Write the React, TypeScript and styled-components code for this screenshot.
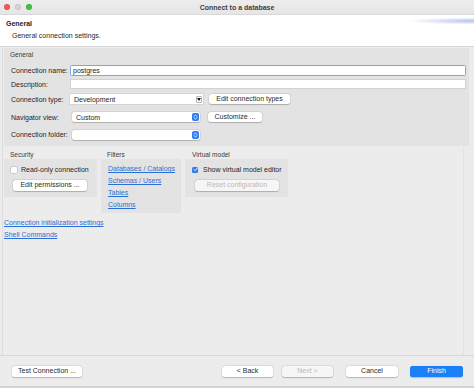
import React from "react";
import styled, { createGlobalStyle } from "styled-components";

const Global = createGlobalStyle`
  html, body { margin: 0; padding: 0; background: #ececec; }
  body { font-family: "Liberation Sans", Arial, sans-serif; font-size: 7px; color: #262626; }
  * { box-sizing: border-box; }
`;

const FONT = `"Liberation Sans", Arial, sans-serif`;

const Window = styled.div`
  width: 474px;
  height: 388px;
  display: flex;
  flex-direction: column;
  background: #ececec;
  overflow: hidden;
`;

const TitleBar = styled.div`
  height: 15px;
  flex: none;
  display: grid;
  grid-template-columns: 1fr auto 1fr;
  align-items: center;
  background: linear-gradient(#ededed, #e6e6e6);
  border-bottom: 1px solid #d9d9d9;
  padding: 0 4px;
`;

const Lights = styled.div`
  display: flex;
  gap: 5px;
  align-items: center;
`;

const Light = styled.span<{ $c: string }>`
  width: 6px;
  height: 6px;
  border-radius: 50%;
  background: ${(p) => p.$c};
  box-shadow: inset 0 0 0 0.5px rgba(0, 0, 0, 0.12);
`;

const Title = styled.div`
  font-weight: bold;
  font-size: 7px;
  color: #3d3d3d;
`;

const Header = styled.div`
  height: 32px;
  flex: none;
  background-color: #ffffff;
  background-image: radial-gradient(ellipse 64px 3.5px at 472px 6px, rgba(160, 175, 225, 0.75), rgba(255, 255, 255, 0));
  border-bottom: 1px solid #d6d6d6;
  padding: 4px 6px 0 6px;
  display: flex;
  flex-direction: column;
`;

const HeaderTitle = styled.div`
  font-weight: bold;
  font-size: 7px;
  line-height: 9px;
  color: #1e1e1e;
`;

const HeaderDesc = styled.div`
  font-size: 7px;
  line-height: 9px;
  margin: 3px 0 0 6px;
  color: #2a2a2a;
`;

const Content = styled.div`
  flex: 1;
  display: flex;
  flex-direction: column;
  border-left: 1px solid #dedede;
  border-right: 1px solid #e2e2e2;
  margin: 0 10px 0 2px;
  padding: 1px 0 0 1px;
`;

const GeneralPanel = styled.div`
  height: 98px;
  background: #e3e3e3;
  padding: 2px 3px 0 7px;
  margin-right: -6px;
  display: flex;
  flex-direction: column;
`;

const GroupTitle = styled.div<{ $ml?: number }>`
  font-size: 6.5px;
  line-height: 9px;
  color: #3a3a3a;
  margin-left: ${(p) => p.$ml ?? 0}px;
`;

const FormRow = styled.div<{ $h: number; $mt: number }>`
  height: ${(p) => p.$h}px;
  margin-top: ${(p) => p.$mt}px;
  display: grid;
  grid-template-columns: 59px 1fr;
  align-items: center;
`;

const Label = styled.div`
  font-size: 7px;
  color: #262626;
  white-space: nowrap;
`;

const Field = styled.div`
  display: flex;
  align-items: center;
  height: 100%;
`;

const TextInput = styled.div<{ $focus?: boolean }>`
  flex: 1;
  height: 100%;
  background: #fff;
  font-size: 7px;
  display: flex;
  align-items: center;
  padding-left: 2px;
  color: #1e1e1e;
  border: ${(p) => (p.$focus ? "1.5px solid #79a6ea" : "0.5px solid #d2d2d2")};
  border-radius: ${(p) => (p.$focus ? "1.5px" : "0")};
`;

const ComboBox = styled.div<{ $w: number }>`
  width: ${(p) => p.$w}px;
  height: 10px;
  background: #fff;
  display: flex;
  align-items: center;
  justify-content: space-between;
  padding: 0 1px 0 4px;
  font-size: 7px;
  color: #1e1e1e;
  box-shadow: 0 0 0 0.5px rgba(0, 0, 0, 0.12);
`;

const ComboArrow = styled.span`
  width: 6px;
  height: 7px;
  background: #fff;
  border: 0.5px solid #b5b5b5;
  border-radius: 1px;
  display: flex;
  align-items: center;
  justify-content: center;
`;

const Popup = styled.div<{ $w: number }>`
  width: ${(p) => p.$w}px;
  height: 10px;
  margin-left: 2px;
  background: #fff;
  border-radius: 2px;
  display: flex;
  align-items: center;
  justify-content: space-between;
  padding: 0 1px 0 4px;
  font-size: 7px;
  color: #1e1e1e;
  box-shadow: 0 0 0 0.5px rgba(0, 0, 0, 0.1), 0 0.5px 1px rgba(0, 0, 0, 0.18);
`;

const Stepper = styled.span`
  width: 7px;
  height: 8px;
  border-radius: 2px;
  background: #2c7cf4;
  display: flex;
  align-items: center;
  justify-content: center;
`;

const Btn = styled.button<{ $w: number; $ml?: number; $mt?: number; $kind?: "primary" | "disabled" }>`
  width: ${(p) => p.$w}px;
  height: 10.5px;
  margin-left: ${(p) => p.$ml ?? 0}px;
  margin-top: ${(p) => p.$mt ?? 0}px;
  padding: 0;
  border: none;
  border-radius: 2.5px;
  font-family: ${FONT};
  font-size: 7px;
  line-height: 10px;
  flex: none;
  background: ${(p) => (p.$kind === "primary" ? "#1b80f6" : p.$kind === "disabled" ? "#f6f6f6" : "#ffffff")};
  color: ${(p) => (p.$kind === "primary" ? "#ffffff" : p.$kind === "disabled" ? "#b9b9b9" : "#2a2a2a")};
  box-shadow: ${(p) =>
    p.$kind === "primary"
      ? "0 0.5px 1px rgba(0,0,0,0.2)"
      : "0 0 0 0.5px rgba(0,0,0,0.1), 0 0.5px 1px rgba(0,0,0,0.2)"};
`;

const GroupsRow = styled.div`
  display: flex;
  align-items: flex-start;
  gap: 4px;
  margin-top: 4px;
`;

const GroupCol = styled.div<{ $w: number }>`
  width: ${(p) => p.$w}px;
  display: flex;
  flex-direction: column;
`;

const SmallPanel = styled.div<{ $h: number; $pl: number; $pt: number }>`
  height: ${(p) => p.$h}px;
  background: #e3e3e3;
  padding: ${(p) => p.$pt}px 0 0 ${(p) => p.$pl}px;
  display: flex;
  flex-direction: column;
  align-items: flex-start;
`;

const CheckRow = styled.div<{ $gap: number }>`
  display: flex;
  align-items: center;
  gap: ${(p) => p.$gap}px;
  height: 9px;
  font-size: 7px;
  color: #262626;
  white-space: nowrap;
`;

const Box = styled.span<{ $on?: boolean }>`
  width: 6px;
  height: 6px;
  border-radius: 1.5px;
  background: ${(p) => (p.$on ? "#2c7cf4" : "#ffffff")};
  box-shadow: ${(p) => (p.$on ? "none" : "0 0 0 0.5px rgba(0,0,0,0.2)")};
  display: flex;
  align-items: center;
  justify-content: center;
`;

const Link = styled.a<{ $lh?: number }>`
  display: block;
  font-size: 7px;
  line-height: ${(p) => p.$lh ?? 12}px;
  color: #2c6fd4;
  text-decoration: underline;
  white-space: nowrap;
`;

const Links = styled.div`
  margin-top: 4px;
  display: flex;
  flex-direction: column;
  align-items: flex-start;
`;

const Footer = styled.div`
  height: 33px;
  flex: none;
  border-top: 1px solid #d9d9d9;
  border-bottom: 2px solid #d2d2d2;
  display: flex;
  align-items: flex-start;
  padding: 10px 11px 0 12px;
`;

const Spacer = styled.div`
  flex: 1;
`;

const Down = () => (
  <svg width="4" height="3" viewBox="0 0 4 3">
    <path d="M0 0 H4 L2 3 Z" fill="#111" />
  </svg>
);

const Updown = () => (
  <svg width="5" height="6" viewBox="0 0 5 6">
    <path d="M1 2.3 L2.5 1 L4 2.3 M1 3.7 L2.5 5 L4 3.7" stroke="#fff" strokeWidth="0.8" fill="none" strokeLinecap="round" strokeLinejoin="round" />
  </svg>
);

const Tick = () => (
  <svg width="5" height="5" viewBox="0 0 5 5">
    <path d="M1 2.6 L2.1 3.7 L4.1 1.2" stroke="#fff" strokeWidth="0.9" fill="none" strokeLinecap="round" strokeLinejoin="round" />
  </svg>
);

export default function App() {
  return (
    <>
      <Global />
      <Window>
        <TitleBar>
          <Lights>
            <Light $c="#ee5c55" />
            <Light $c="#d3d3d3" />
            <Light $c="#3ec143" />
          </Lights>
          <Title>Connect to a database</Title>
          <div />
        </TitleBar>
        <Header>
          <HeaderTitle>General</HeaderTitle>
          <HeaderDesc>General connection settings.</HeaderDesc>
        </Header>
        <Content>
          <GeneralPanel>
            <GroupTitle $ml={-1}>General</GroupTitle>
            <FormRow $h={11} $mt={6}>
              <Label>Connection name:</Label>
              <Field>
                <TextInput $focus>postgres</TextInput>
              </Field>
            </FormRow>
            <FormRow $h={10} $mt={3}>
              <Label>Description:</Label>
              <Field>
                <TextInput />
              </Field>
            </FormRow>
            <FormRow $h={12} $mt={4}>
              <Label>Connection type:</Label>
              <Field>
                <ComboBox $w={133}>
                  Development
                  <ComboArrow>
                    <Down />
                  </ComboArrow>
                </ComboBox>
                <Btn $w={81} $ml={6}>Edit connection types</Btn>
              </Field>
            </FormRow>
            <FormRow $h={12} $mt={6}>
              <Label>Navigator view:</Label>
              <Field>
                <Popup $w={128}>
                  Custom
                  <Stepper>
                    <Updown />
                  </Stepper>
                </Popup>
                <Btn $w={54} $ml={8}>Customize ...</Btn>
              </Field>
            </FormRow>
            <FormRow $h={11} $mt={6}>
              <Label>Connection folder:</Label>
              <Field>
                <Popup $w={128}>
                  <span />
                  <Stepper>
                    <Updown />
                  </Stepper>
                </Popup>
              </Field>
            </FormRow>
          </GeneralPanel>

          <GroupsRow>
            <GroupCol $w={93}>
              <GroupTitle $ml={6}>Security</GroupTitle>
              <SmallPanel $h={38} $pl={7} $pt={6}>
                <CheckRow $gap={4}>
                  <Box />
                  Read-only connection
                </CheckRow>
                <Btn $w={74} $ml={2} $mt={6}>Edit permissions ...</Btn>
              </SmallPanel>
            </GroupCol>
            <GroupCol $w={80}>
              <GroupTitle $ml={6}>Filters</GroupTitle>
              <SmallPanel $h={54} $pl={7} $pt={4}>
                <Link>Databases / Catalogs</Link>
                <Link>Schemas / Users</Link>
                <Link>Tables</Link>
                <Link>Columns</Link>
              </SmallPanel>
            </GroupCol>
            <GroupCol $w={103}>
              <GroupTitle $ml={7}>Virtual model</GroupTitle>
              <SmallPanel $h={38} $pl={7} $pt={6}>
                <CheckRow $gap={5}>
                  <Box $on>
                    <Tick />
                  </Box>
                  Show virtual model editor
                </CheckRow>
                <Btn $w={84} $ml={3} $mt={6} $kind="disabled">Reset configuration</Btn>
              </SmallPanel>
            </GroupCol>
          </GroupsRow>

          <Links>
            <Link>Connection initialization settings</Link>
            <Link>Shell Commands</Link>
          </Links>
        </Content>
        <Footer>
          <Btn $w={70}>Test Connection ...</Btn>
          <Spacer />
          <Btn $w={51}>&lt; Back</Btn>
          <Btn $w={51} $ml={9} $kind="disabled">Next &gt;</Btn>
          <Btn $w={52} $ml={13}>Cancel</Btn>
          <Btn $w={53} $ml={12} $kind="primary">Finish</Btn>
        </Footer>
      </Window>
    </>
  );
}
